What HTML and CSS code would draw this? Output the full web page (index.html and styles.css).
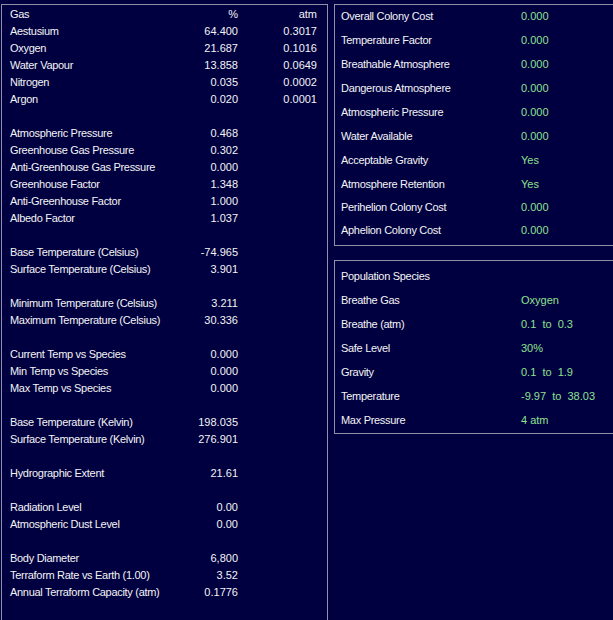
FILE: index.html
```html
<!DOCTYPE html>
<html>
<head>
<meta charset="utf-8">
<link rel="stylesheet" href="styles.css">
</head>
<body>
<div class="screen">
  <section class="panel left">
    <div class="group">
      <div class="row"><span class="lbl">Gas</span><span class="num">%</span><span class="num">atm</span></div>
      <div class="row"><span class="lbl">Aestusium</span><span class="num">64.400</span><span class="num">0.3017</span></div>
      <div class="row"><span class="lbl">Oxygen</span><span class="num">21.687</span><span class="num">0.1016</span></div>
      <div class="row"><span class="lbl">Water Vapour</span><span class="num">13.858</span><span class="num">0.0649</span></div>
      <div class="row"><span class="lbl">Nitrogen</span><span class="num">0.035</span><span class="num">0.0002</span></div>
      <div class="row"><span class="lbl">Argon</span><span class="num">0.020</span><span class="num">0.0001</span></div>
    </div>
    <div class="group">
      <div class="row"><span class="lbl">Atmospheric Pressure</span><span class="num">0.468</span></div>
      <div class="row"><span class="lbl">Greenhouse Gas Pressure</span><span class="num">0.302</span></div>
      <div class="row"><span class="lbl">Anti-Greenhouse Gas Pressure</span><span class="num">0.000</span></div>
      <div class="row"><span class="lbl">Greenhouse Factor</span><span class="num">1.348</span></div>
      <div class="row"><span class="lbl">Anti-Greenhouse Factor</span><span class="num">1.000</span></div>
      <div class="row"><span class="lbl">Albedo Factor</span><span class="num">1.037</span></div>
    </div>
    <div class="group">
      <div class="row"><span class="lbl">Base Temperature (Celsius)</span><span class="num">-74.965</span></div>
      <div class="row"><span class="lbl">Surface Temperature (Celsius)</span><span class="num">3.901</span></div>
    </div>
    <div class="group">
      <div class="row"><span class="lbl">Minimum Temperature (Celsius)</span><span class="num">3.211</span></div>
      <div class="row"><span class="lbl">Maximum Temperature (Celsius)</span><span class="num">30.336</span></div>
    </div>
    <div class="group">
      <div class="row"><span class="lbl">Current Temp vs Species</span><span class="num">0.000</span></div>
      <div class="row"><span class="lbl">Min Temp vs Species</span><span class="num">0.000</span></div>
      <div class="row"><span class="lbl">Max Temp vs Species</span><span class="num">0.000</span></div>
    </div>
    <div class="group">
      <div class="row"><span class="lbl">Base Temperature (Kelvin)</span><span class="num">198.035</span></div>
      <div class="row"><span class="lbl">Surface Temperature (Kelvin)</span><span class="num">276.901</span></div>
    </div>
    <div class="group">
      <div class="row"><span class="lbl">Hydrographic Extent</span><span class="num">21.61</span></div>
    </div>
    <div class="group">
      <div class="row"><span class="lbl">Radiation Level</span><span class="num">0.00</span></div>
      <div class="row"><span class="lbl">Atmospheric Dust Level</span><span class="num">0.00</span></div>
    </div>
    <div class="group">
      <div class="row"><span class="lbl">Body Diameter</span><span class="num">6,800</span></div>
      <div class="row"><span class="lbl">Terraform Rate vs Earth (1.00)</span><span class="num">3.52</span></div>
      <div class="row"><span class="lbl">Annual Terraform Capacity (atm)</span><span class="num">0.1776</span></div>
    </div>
  </section>

  <div class="right">
    <section class="panel cost">
      <div class="item"><span class="lbl">Overall Colony Cost</span><span class="val">0.000</span></div>
      <div class="item"><span class="lbl">Temperature Factor</span><span class="val">0.000</span></div>
      <div class="item"><span class="lbl">Breathable Atmosphere</span><span class="val">0.000</span></div>
      <div class="item"><span class="lbl">Dangerous Atmosphere</span><span class="val">0.000</span></div>
      <div class="item"><span class="lbl">Atmospheric Pressure</span><span class="val">0.000</span></div>
      <div class="item"><span class="lbl">Water Available</span><span class="val">0.000</span></div>
      <div class="item"><span class="lbl">Acceptable Gravity</span><span class="val">Yes</span></div>
      <div class="item short"><span class="lbl">Atmosphere Retention</span><span class="val">Yes</span></div>
      <div class="item short"><span class="lbl">Perihelion Colony Cost</span><span class="val">0.000</span></div>
      <div class="item"><span class="lbl">Aphelion Colony Cost</span><span class="val">0.000</span></div>
    </section>
    <section class="panel species">
      <div class="item"><span class="lbl">Population Species</span></div>
      <div class="item"><span class="lbl">Breathe Gas</span><span class="val">Oxygen</span></div>
      <div class="item"><span class="lbl">Breathe (atm)</span><span class="val">0.1  to  0.3</span></div>
      <div class="item"><span class="lbl">Safe Level</span><span class="val">30%</span></div>
      <div class="item"><span class="lbl">Gravity</span><span class="val">0.1  to  1.9</span></div>
      <div class="item"><span class="lbl">Temperature</span><span class="val">-9.97  to  38.03</span></div>
      <div class="item"><span class="lbl">Max Pressure</span><span class="val">4 atm</span></div>
    </section>
  </div>
</div>
</body>
</html>
```

FILE: styles.css
```css
html, body {
  margin: 0;
  padding: 0;
  background: #000040;
  overflow: hidden;
}

body {
  width: 613px;
  height: 620px;
  font-family: "Liberation Sans", Arial, sans-serif;
  font-size: 11px;
  color: #f4f4f4;
}

.screen {
  display: flex;
  align-items: flex-start;
  gap: 6px;
  padding: 4px 0 0 1px;
}

.panel {
  border: 1px solid #9090a8;
  box-sizing: border-box;
}

.lbl {
  letter-spacing: -0.3px;
}

.left {
  width: 327px;
  height: 616px;
  border-bottom: none;
  flex: none;
  padding: 1px 0 0 8px;
}

.group {
  margin-bottom: 17px;
}

.row {
  display: grid;
  grid-template-columns: 160px 68px 79px;
  height: 17px;
  line-height: 17px;
  white-space: nowrap;
}

.num {
  text-align: right;
}

.right {
  display: flex;
  flex-direction: column;
  gap: 14px;
  width: 279px;
  flex: none;
}

.right .panel {
  border-right: none;
}

.cost {
  height: 242px;
  padding: 0 0 0 6px;
}

.species {
  height: 174px;
  padding: 4px 0 0 6px;
}

.item {
  display: grid;
  grid-template-columns: 180px 1fr;
  height: 24px;
  line-height: 22px;
  white-space: pre;
}

.item.short {
  height: 23px;
}

.val {
  color: #8fe08f;
}
```
